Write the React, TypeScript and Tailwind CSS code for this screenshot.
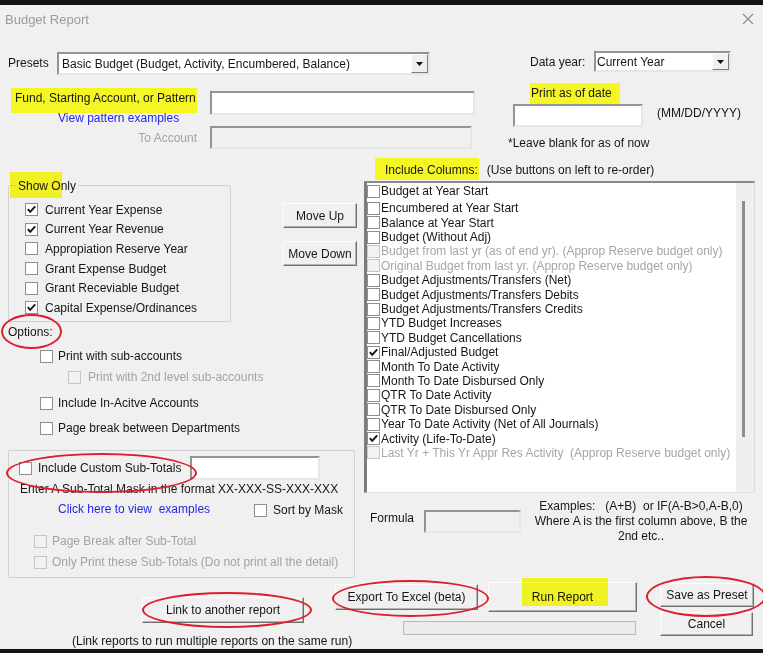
import type { ReactNode } from 'react'

type Item = { label: string; on?: boolean; off?: boolean }

const showOnly: Item[] = [
  { label: 'Current Year Expense', on: true },
  { label: 'Current Year Revenue', on: true },
  { label: 'Appropiation Reserve Year' },
  { label: 'Grant Expense Budget' },
  { label: 'Grant Receviable Budget' },
  { label: 'Capital Expense/Ordinances', on: true },
]

const columns: Item[] = [
  { label: 'Budget at Year Start' },
  { label: 'Encumbered at Year Start' },
  { label: 'Balance at Year Start' },
  { label: 'Budget (Without Adj)' },
  { label: 'Budget from last yr (as of end yr). (Approp Reserve budget only)', off: true },
  { label: 'Original Budget from last yr. (Approp Reserve budget only)', off: true },
  { label: 'Budget Adjustments/Transfers (Net)' },
  { label: 'Budget Adjustments/Transfers Debits' },
  { label: 'Budget Adjustments/Transfers Credits' },
  { label: 'YTD Budget Increases' },
  { label: 'YTD Budget Cancellations' },
  { label: 'Final/Adjusted Budget', on: true },
  { label: 'Month To Date Activity' },
  { label: 'Month To Date Disbursed Only' },
  { label: 'QTR To Date Activity' },
  { label: 'QTR To Date Disbursed Only' },
  { label: 'Year To Date Activity (Net of All Journals)' },
  { label: 'Activity (Life-To-Date)', on: true },
  { label: 'Last Yr + This Yr Appr Res Activity  (Approp Reserve budget only)', off: true },
]

function Check({ on, off }: { on?: boolean; off?: boolean }) {
  return (
    <span
      className={`flex h-[13px] w-[13px] shrink-0 items-center justify-center border ${
        off ? 'border-[#c6c6c6] bg-[#f2f2f2]' : 'border-[#8e8e8e] bg-white'
      }`}
    >
      {on && (
        <svg width="11" height="11" viewBox="0 0 11 11">
          <polyline points="1.8,5.2 4.2,7.8 9.2,2.4" fill="none" stroke="#111" strokeWidth="1.9" />
        </svg>
      )}
    </span>
  )
}

function Field({ className = '' }: { className?: string }) {
  return (
    <div
      className={`border-2 border-t-[#939393] border-l-[#939393] border-r-[#e6e6e6] border-b-[#e6e6e6] ${className}`}
    />
  )
}

function Combo({ text, className = '' }: { text: string; className?: string }) {
  return (
    <div
      className={`flex border-2 border-t-[#939393] border-l-[#939393] border-r-[#e6e6e6] border-b-[#e6e6e6] bg-white ${className}`}
    >
      <span className="flex-1 self-center whitespace-nowrap">{text}</span>
      <div className="flex w-[17px] items-center justify-center border border-t-white border-l-white border-r-[#7d7d7d] border-b-[#7d7d7d] bg-[#f0f0f0]">
        <svg width="7" height="4" viewBox="0 0 7 4">
          <polygon points="0,0 7,0 3.5,4" fill="#111" />
        </svg>
      </div>
    </div>
  )
}

function Btn({ children, className = '' }: { children?: ReactNode; className?: string }) {
  return (
    <button
      type="button"
      className={`flex items-center justify-center border border-t-[#fcfcfc] border-l-[#fcfcfc] border-r-[#6f6f6f] border-b-[#6f6f6f] bg-[#f0f0f0] shadow-[inset_-1px_-1px_0_#b4b4b4] ${className}`}
    >
      {children}
    </button>
  )
}

export default function App() {
  return (
    <div className="relative h-[653px] w-[763px] overflow-hidden bg-[#141414] font-['Liberation_Sans',Arial,sans-serif] text-[12px] leading-[14px] text-[#161616]">
      <div className="h-[5px]" />
      <div className="flex h-[644px] flex-col bg-[#f0f0f0]">
        {/* title bar */}
        <div className="flex h-[30px] items-center justify-between">
          <span className="pl-[5px] text-[13px] text-[#9b9b9b]">Budget Report</span>
          <svg className="mb-[2px] mr-[9px]" width="12" height="12" viewBox="0 0 12 12">
            <path d="M1 1 L11 11 M11 1 L1 11" stroke="#8a8a8a" strokeWidth="1.1" />
          </svg>
        </div>

        {/* presets */}
        <div className="mt-[16px] flex h-[24px] items-start">
          <span className="ml-[8px] mt-[5px] w-[49px]">Presets</span>
          <Combo className="mt-[1px] h-[23px] w-[373px] pl-[3px]" text="Basic Budget (Budget, Activity, Encumbered, Balance)" />
          <span className="ml-[100px] mt-[4px] w-[64px]">Data year:</span>
          <Combo className="h-[21px] w-[137px] pl-[1px]" text="Current Year" />
        </div>

        {/* account + date */}
        <div className="mt-[8px] flex h-[67px]">
          <div className="w-[508px] pt-[8px]">
            <div className="flex h-[35px]">
              <div className="-mt-[3px] flex w-[210px] flex-col items-start">
                <span className="ml-[11px] bg-[#f6f624] pb-[8px] pl-[4px] pr-[1px] pt-[3px]">Fund, Starting Account, or Pattern</span>
                <span className="-mt-[2px] ml-[58px] text-[#2626e8]">View pattern examples</span>
              </div>
              <Field className="h-[24px] w-[265px] bg-white" />
            </div>
            <div className="flex h-[23px] items-center">
              <span className="w-[197px] text-right text-[#a3a3a3]">To Account</span>
              <Field className="ml-[13px] h-[23px] w-[262px] bg-[#f0f0f0]" />
            </div>
          </div>
          <div className="flex flex-col items-start">
            <span className="ml-[22px] bg-[#f6f624] pb-[5px] pl-[1px] pr-[8px] pt-[3px]">Print as of date</span>
            <div className="-mt-[1px] ml-[5px] flex items-start">
              <Field className="h-[23px] w-[130px] bg-white" />
              <span className="ml-[14px] mt-[2px]">(MM/DD/YYYY)</span>
            </div>
            <span className="mt-[9px]">*Leave blank for as of now</span>
          </div>
        </div>

        {/* main */}
        <div className="mt-[8px] flex">
          <div className="flex w-[364px] flex-col items-start">
            <div className="mt-[27px] flex items-start">
              <div className="relative ml-[8px] h-[137px] w-[223px] rounded-[2px] border border-[#d2d2d2] pl-[16px] pt-[14px]">
                <span className="absolute -top-[7px] left-[7px] bg-[#f0f0f0] px-[2px]">Show Only</span>
                <div className="absolute -top-[14px] left-[1px] h-[26px] w-[52px] bg-[#ffff26] mix-blend-multiply" />
                {showOnly.map((s) => (
                  <div key={s.label} className="flex h-[19.6px] items-center gap-[7px]">
                    <Check on={s.on} />
                    <span>{s.label}</span>
                  </div>
                ))}
              </div>
              <div className="ml-[52px] mt-[18px] flex flex-col gap-[13px]">
                <Btn className="h-[25px] w-[74px]">Move Up</Btn>
                <Btn className="h-[25px] w-[74px]">Move Down</Btn>
              </div>
            </div>

            <span className="ml-[8px] mt-[3px]">Options:</span>
            <div className="ml-[40px] mt-[10px] flex h-[14px] items-center gap-[5px]">
              <Check />
              <span>Print with sub-accounts</span>
            </div>
            <div className="ml-[68px] mt-[7px] flex h-[14px] items-center gap-[7px] text-[#a3a3a3]">
              <Check off />
              <span>Print with 2nd level sub-accounts</span>
            </div>
            <div className="ml-[40px] mt-[12px] flex h-[14px] items-center gap-[5px]">
              <Check />
              <span>Include In-Acitve Accounts</span>
            </div>
            <div className="ml-[40px] mt-[11px] flex h-[14px] items-center gap-[5px]">
              <Check />
              <span>Page break between Departments</span>
            </div>

            <div className="ml-[8px] mt-[15px] h-[128px] w-[347px] rounded-[2px] border border-[#d2d2d2]">
              <div className="mt-[5px] flex h-[24px] items-center pl-[10px]">
                <Check />
                <span className="ml-[6px] w-[152px]">Include Custom Sub-Totals</span>
                <Field className="h-[24px] w-[130px] bg-white" />
              </div>
              <div className="ml-[11px] mt-[2px]">Enter A Sub-Total Mask in the format XX-XXX-SS-XXX-XXX</div>
              <div className="mt-[4px] flex items-center">
                <span className="ml-[49px] w-[196px] whitespace-pre text-[#2626e8]">Click here to view  examples</span>
                <span className="mt-[3px] flex items-center gap-[6px]">
                  <Check />
                  <span>Sort by Mask</span>
                </span>
              </div>
              <div className="ml-[25px] mt-[17px] flex h-[14px] items-center gap-[5px] text-[#a3a3a3]">
                <Check off />
                <span>Page Break after Sub-Total</span>
              </div>
              <div className="ml-[25px] mt-[7px] flex h-[14px] items-center gap-[5px] text-[#a3a3a3]">
                <Check off />
                <span>Only Print these Sub-Totals (Do not print all the detail)</span>
              </div>
            </div>
          </div>

          <div className="flex flex-col items-start">
            <div className="flex items-start">
              <span className="ml-[11px] bg-[#f6f624] pb-[3px] pl-[10px] pr-[1px] pt-[5px]">Include Columns:</span>
              <span className="ml-[8px] mt-[5px]">(Use buttons on left to re-order)</span>
            </div>
            <div className="mt-[1px] flex h-[312px] w-[391px] border-b border-l-[3px] border-r border-t-2 border-b-[#e2e2e2] border-l-[#7c7c7c] border-r-[#dadada] border-t-[#8a8a8a] bg-white">
              <div className="flex-1 pt-[1px]">
                {columns.map((c, i) => (
                  <div
                    key={c.label}
                    className={`flex h-[14.4px] items-center gap-[1px] whitespace-pre ${i === 0 ? 'mb-[2.7px]' : ''} ${
                      c.off ? 'text-[#a6a6a6]' : ''
                    }`}
                  >
                    <Check on={c.on} off={c.off} />
                    <span>{c.label}</span>
                  </div>
                ))}
              </div>
              <div className="flex w-[18px] flex-col bg-[#efefef]">
                <div className="ml-[6px] mt-[18px] h-[236px] w-[3px] bg-[#8d8d8d]" />
              </div>
            </div>
            <div className="mt-[6px] flex items-start">
              <span className="ml-[6px] mt-[12px]">Formula</span>
              <Field className="ml-[10px] mt-[11px] h-[23px] w-[97px] bg-[#f0f0f0]" />
              <div className="ml-[11px] w-[218px] whitespace-pre text-center leading-[15px]">
                <div>Examples:   (A+B)  or IF(A-B&gt;0,A-B,0)</div>
                <div>Where A is the first column above, B the</div>
                <div>2nd etc..</div>
              </div>
            </div>
          </div>
        </div>

        {/* bottom buttons */}
        <div className="flex items-start">
          <div className="flex w-[335px] flex-col items-start">
            <Btn className="ml-[142px] mt-[19px] h-[26px] w-[162px]">Link to another report</Btn>
            <span className="ml-[72px] mt-[11px] whitespace-nowrap">(Link reports to run multiple reports on the same run)</span>
          </div>
          <div className="flex w-[302px] flex-col items-start">
            <div className="mt-[4px] flex items-start">
              <Btn className="mt-[2px] h-[26px] w-[143px]">Export To Excel (beta)</Btn>
              <Btn className="ml-[10px] h-[30px] w-[149px]">Run Report</Btn>
            </div>
            <div className="ml-[68px] mt-[9px] h-[14px] w-[233px] border border-[#b9b9b9] bg-[#ececec]" />
          </div>
          <div className="ml-[23px] flex flex-col items-start">
            <Btn className="mt-[5px] h-[24px] w-[94px]">Save as Preset</Btn>
            <Btn className="mt-[5px] h-[24px] w-[93px]">Cancel</Btn>
          </div>
        </div>
      </div>
      <div className="h-[4px]" />

      {/* reviewer markup on top of the dialog */}
      <div className="pointer-events-none absolute left-[522px] top-[578px] h-[28px] w-[86px] bg-[#ffff26] mix-blend-multiply" />
      <div className="pointer-events-none absolute left-[1px] top-[314px] h-[35px] w-[61px] rounded-[50%] border-2 border-[#dc1f2c]" />
      <div className="pointer-events-none absolute left-[6px] top-[453px] h-[40px] w-[191px] rounded-[50%] border-2 border-[#dc1f2c]" />
      <div className="pointer-events-none absolute left-[142px] top-[592px] h-[36px] w-[170px] rounded-[50%] border-2 border-[#dc1f2c]" />
      <div className="pointer-events-none absolute left-[332px] top-[580px] h-[37px] w-[157px] rounded-[50%] border-2 border-[#dc1f2c]" />
      <div className="pointer-events-none absolute left-[646px] top-[576px] h-[41px] w-[120px] rounded-[50%] border-2 border-[#dc1f2c]" />
    </div>
  )
}
